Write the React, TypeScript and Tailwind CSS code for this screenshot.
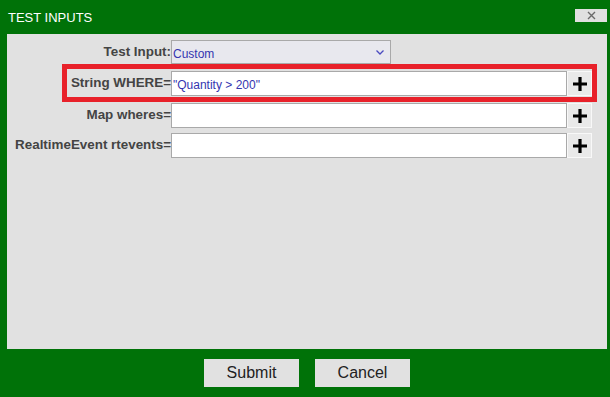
import React from "react";

const GREEN = "bg-[#007208]";

function Plus() {
    return (
        <button className="flex h-[25px] w-[25px] shrink-0 items-center justify-center border border-[#f8f8f8] bg-[#e9e9e9]">
            <svg width="16" height="16" viewBox="0 0 16 16">
                <path d="M8 1v14M1 8h14" stroke="#000" strokeWidth="3.2" />
            </svg>
        </button>
    );
}

function Row({ label, value }: { label: string; value?: string }) {
    return (
        <div className="flex h-[25px] items-center">
            <label className="w-[164px] shrink-0 text-right text-[13.4px] font-bold text-[#444]">
                {label}
            </label>
            <div className="flex h-[25px] w-[396px] items-center border border-[#a9a9a9] bg-white px-[1px] pt-[2px] text-[12px] text-[#3535b0]">
                {value}
            </div>
            <Plus />
        </div>
    );
}

export default function App() {
    return (
        <div
            className={`flex h-[397px] w-[610px] flex-col ${GREEN}`}
            style={{ fontFamily: '"Liberation Sans", Arial, sans-serif' }}
        >
            {/* title bar */}
            <div className="flex h-[34px] shrink-0 items-start justify-between pl-[8px] pr-[3px]">
                <span className="mt-[10px] text-[13px] leading-[16px] text-white">TEST INPUTS</span>
                <button className="mt-[9px] flex h-[13px] w-[32px] items-center justify-center bg-[#e0e0e0]">
                    <svg width="9" height="9" viewBox="0 0 9 9">
                        <path d="M1 1l7 7M8 1l-7 7" stroke="#6a6a6a" strokeWidth="1.4" />
                    </svg>
                </button>
            </div>

            {/* body */}
            <div className="relative ml-[7px] mr-[3px] h-[315px] shrink-0 bg-[#e1e1e1] pt-[6px]">
                <div className="flex h-[24px] items-center">
                    <label className="w-[164px] shrink-0 text-right text-[13.4px] font-bold text-[#444]">
                        Test Input:
                    </label>
                    <div className="flex h-[24px] w-[220px] items-center justify-between border border-[#a9a9a9] bg-[#e8e8ee] pl-[1px] pr-[6px] text-[12px] text-[#3535b0]">
                        <span className="pt-[3px]">Custom</span>
                        <svg width="8" height="5" viewBox="0 0 8 5">
                            <path d="M0.5 0.5l3.5 3.5 3.5-3.5" fill="none" stroke="#4a4ac0" strokeWidth="1.3" />
                        </svg>
                    </div>
                </div>
                <div className="mt-[7px]">
                    <Row label="String WHERE=" value={'"Quantity > 200"'} />
                </div>
                <div className="mt-[7px]">
                    <Row label="Map wheres=" />
                </div>
                <div className="mt-[5px]">
                    <Row label="RealtimeEvent rtevents=" />
                </div>

                {/* highlight annotation */}
                <div className="pointer-events-none absolute left-[55px] top-[30px] h-[38px] w-[535px] border-[5px] border-[#e8212a]" />
            </div>

            {/* footer */}
            <div className="flex gap-[16px] pl-[204px] pt-[10px]">
                <button className="h-[28px] w-[95px] bg-[#e1e1e1] text-[16px] text-[#222]">Submit</button>
                <button className="h-[28px] w-[95px] bg-[#e1e1e1] text-[16px] text-[#222]">Cancel</button>
            </div>
        </div>
    );
}
